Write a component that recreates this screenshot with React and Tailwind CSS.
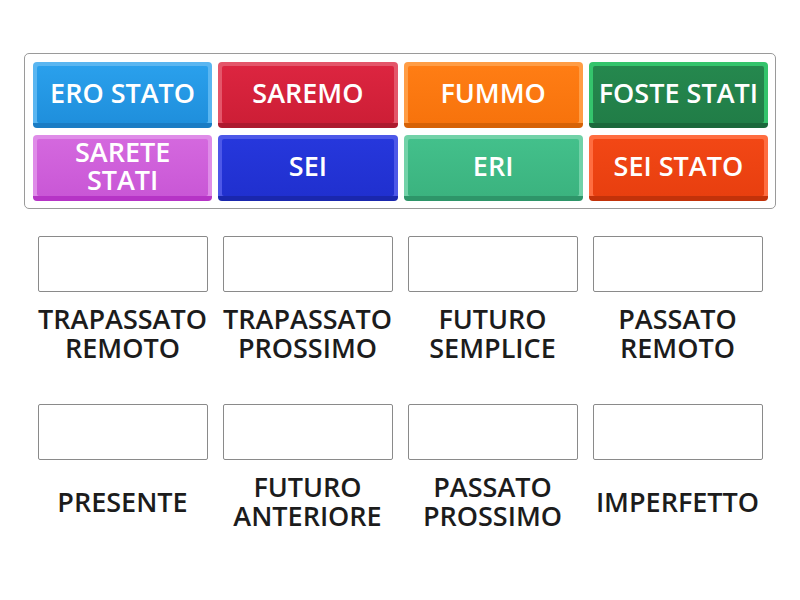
const tiles = [
  { text: 'ERO STATO', light: 'bg-[#5ab6f1]', mid: 'from-[#2aa0ec] to-[#1f8fdc]', dark: 'border-[#1a7cc4]' },
  { text: 'SAREMO', light: 'bg-[#e4566a]', mid: 'from-[#dc2540] to-[#cd1e36]', dark: 'border-[#ad1a2e]' },
  { text: 'FUMMO', light: 'bg-[#ff9d45]', mid: 'from-[#ff7d14] to-[#f7730c]', dark: 'border-[#d66206]' },
  { text: 'FOSTE STATI', light: 'bg-[#34c46c]', mid: 'from-[#25884e] to-[#217d47]', dark: 'border-[#1b683b]' },
  { text: 'SARETE STATI', light: 'bg-[#df8ce8]', mid: 'from-[#d468de] to-[#c957d6]', dark: 'border-[#b634c6]' },
  { text: 'SEI', light: 'bg-[#4d58e8]', mid: 'from-[#2637dc] to-[#2030cf]', dark: 'border-[#1a27ad]' },
  { text: 'ERI', light: 'bg-[#72d2a8]', mid: 'from-[#43c08b] to-[#3bb37f]', dark: 'border-[#2e9569]' },
  { text: 'SEI STATO', light: 'bg-[#ff6d40]', mid: 'from-[#f24715] to-[#e83f0f]', dark: 'border-[#c2320a]' },
]

const rows = [
  ['TRAPASSATO REMOTO', 'TRAPASSATO PROSSIMO', 'FUTURO SEMPLICE', 'PASSATO REMOTO'],
  ['PRESENTE', 'FUTURO ANTERIORE', 'PASSATO PROSSIMO', 'IMPERFETTO'],
]

function Tile({ tile }) {
  return (
    <div className={`h-[66px] rounded-[4px] border-b-[5px] ${tile.dark} ${tile.light} pt-[4px] px-[4px] flex`}>
      <div className={`flex-1 rounded-[2px] bg-gradient-to-b ${tile.mid} flex items-center justify-center text-center text-white text-[27px] leading-[28px] font-semibold pb-[4px]`}>
        {tile.text}
      </div>
    </div>
  )
}

export default function App() {
  return (
    <div className="w-[800px] h-[600px] bg-white" style={{ fontFamily: '"Open Sans", sans-serif' }}>
      <div className="pt-[53px] pl-[24px]">
        {/* tile tray */}
        <div className="w-[752px] h-[156px] border border-[#9a9a9a] rounded-[5px] pt-[8px] pl-[8px] pr-[7px]">
          <div className="grid grid-cols-4 gap-x-[6px] gap-y-[7px]">
            {tiles.map((t) => (
              <Tile key={t.text} tile={t} />
            ))}
          </div>
        </div>
      </div>

      {/* drop targets */}
      <div className="pl-[30px] pt-[27px] flex flex-col gap-[42px]">
        {rows.map((row, i) => (
          <div key={i} className="grid grid-cols-[repeat(4,185px)]">
            {row.map((label) => (
              <div key={label} className="flex flex-col items-center">
                <div className="w-[170px] h-[56px] border border-[#8a8a8a] rounded-[2px] bg-white"></div>
                <div className="mt-[12px] h-[58px] flex items-center justify-center text-center text-[27px] leading-[29px] font-semibold text-[#1c1c1c] w-[185px]">
                  {label}
                </div>
              </div>
            ))}
          </div>
        ))}
      </div>
    </div>
  )
}
